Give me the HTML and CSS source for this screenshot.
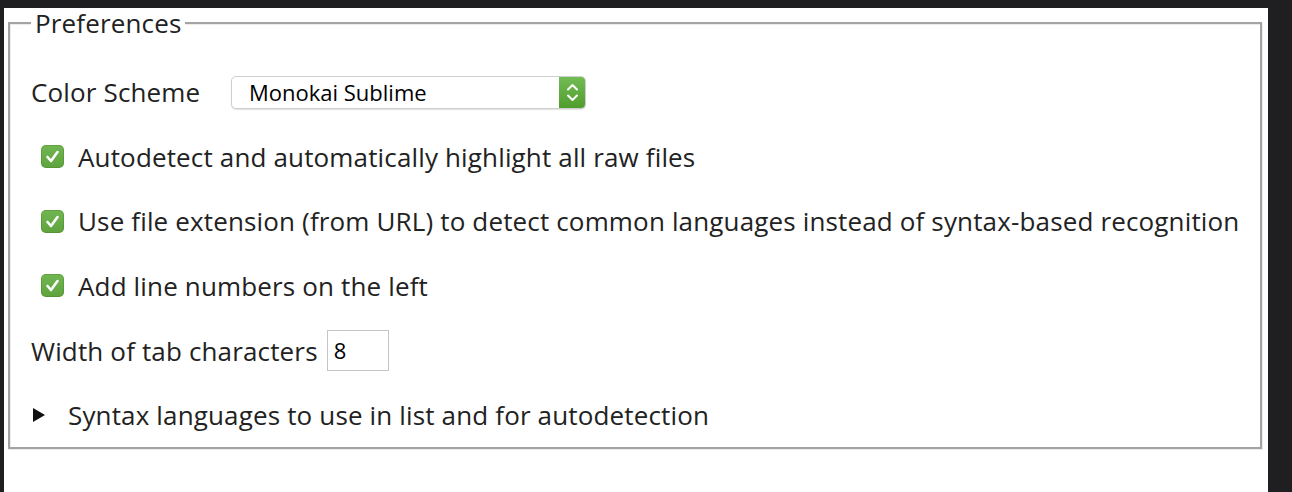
FILE: index.html
```html
<!DOCTYPE html>
<html lang="en">
<head>
<meta charset="utf-8">
<title>Preferences</title>
<link rel="stylesheet" href="styles.css">
</head>
<body>
<div class="panel">
  <fieldset class="prefs">
    <legend class="prefs-title">Preferences</legend>

    <div class="row row-a">
      <span class="label label-scheme">Color Scheme</span>
      <div class="select">
        <span class="select-value">Monokai Sublime</span>
        <span class="select-arrows">
          <svg width="27" height="33" viewBox="0 0 27 33">
            <path d="M9 13.5 L13.5 9 L18 13.5" fill="none" stroke="#fff" stroke-width="2" stroke-linecap="round" stroke-linejoin="round"/>
            <path d="M9 19.5 L13.5 24 L18 19.5" fill="none" stroke="#fff" stroke-width="2" stroke-linecap="round" stroke-linejoin="round"/>
          </svg>
        </span>
      </div>
    </div>

    <div class="row row-b">
      <span class="check">
        <svg width="23" height="23" viewBox="0 0 23 23">
          <path d="M6.5 12 L10 16 L16.5 7" fill="none" stroke="#fff" stroke-width="2.6" stroke-linecap="round" stroke-linejoin="round"/>
        </svg>
      </span>
      <span class="label">Autodetect and automatically highlight all raw files</span>
    </div>

    <div class="row row-a">
      <span class="check">
        <svg width="23" height="23" viewBox="0 0 23 23">
          <path d="M6.5 12 L10 16 L16.5 7" fill="none" stroke="#fff" stroke-width="2.6" stroke-linecap="round" stroke-linejoin="round"/>
        </svg>
      </span>
      <span class="label">Use file extension (from URL) to detect common languages instead of syntax-based recognition</span>
    </div>

    <div class="row row-b">
      <span class="check">
        <svg width="23" height="23" viewBox="0 0 23 23">
          <path d="M6.5 12 L10 16 L16.5 7" fill="none" stroke="#fff" stroke-width="2.6" stroke-linecap="round" stroke-linejoin="round"/>
        </svg>
      </span>
      <span class="label">Add line numbers on the left</span>
    </div>

    <div class="row row-b">
      <span class="label">Width of tab characters</span>
      <span class="num-input">8</span>
    </div>

    <div class="row row-a">
      <span class="triangle"></span>
      <span class="label">Syntax languages to use in list and for autodetection</span>
    </div>
  </fieldset>
</div>
</body>
</html>
```

FILE: styles.css
```css
html, body {
  margin: 0;
  padding: 0;
}

body {
  background: #1f1f21;
  padding: 8px 24px 0 4px;
  height: 492px;
  box-sizing: border-box;
  font-family: "Open Sans", "Liberation Sans", sans-serif;
  color: #222;
}

.panel {
  background: #fff;
  height: 484px;
  padding: 0 6px 0 4px;
  box-sizing: border-box;
}

.prefs {
  margin: 0;
  padding: 22px 0 0 21px;
  border: 2px solid #a3a3a3;
  box-shadow: inset 1px 1px 0 #ebebeb, 1px 1px 0 #ebebeb;
  min-width: 0;
}

.prefs-title {
  font-size: 26px;
  line-height: 30px;
  letter-spacing: 0.15px;
  padding: 0 4px;
  margin-left: 0;
  background: #fff;
}

.row {
  display: flex;
  align-items: center;
  font-size: 26px;
  line-height: 30px;
  letter-spacing: 0.15px;
  white-space: nowrap;
}

.row-a { height: 64px; }
.row-b { height: 65px; }

.label-scheme {
  width: 200px;
  flex: none;
}

.select {
  display: flex;
  align-items: center;
  width: 355px;
  height: 33px;
  box-sizing: border-box;
  border: 1px solid #cfcfcf;
  border-radius: 5px;
  box-shadow: 0 1px 1px rgba(0, 0, 0, 0.12);
  overflow: hidden;
  background: #fff;
}

.select-value {
  flex: 1;
  padding-left: 17px;
  font-size: 22px;
  line-height: 31px;
  letter-spacing: 0;
  color: #000;
}

.select-arrows {
  display: flex;
  width: 27px;
  height: 33px;
  margin: -1px -1px -1px 0;
  background: linear-gradient(#73bd55, #4f9c2c);
}

.check {
  display: flex;
  width: 23px;
  height: 23px;
  margin-left: 10px;
  margin-right: 14px;
  border-radius: 5px;
  background: linear-gradient(#71b650, #5ea33e);
  box-shadow: inset 0 0 0 1px rgba(60, 120, 30, 0.3);
}

.num-input {
  margin-left: 9px;
  width: 62px;
  height: 41px;
  box-sizing: border-box;
  border: 1px solid #c4c4c4;
  padding-left: 6px;
  font-size: 22px;
  line-height: 39px;
  letter-spacing: 0;
  color: #000;
}

.triangle {
  width: 0;
  height: 0;
  margin-left: 2px;
  margin-right: 23px;
  border-top: 7px solid transparent;
  border-bottom: 7px solid transparent;
  border-left: 12px solid #111;
}
```
